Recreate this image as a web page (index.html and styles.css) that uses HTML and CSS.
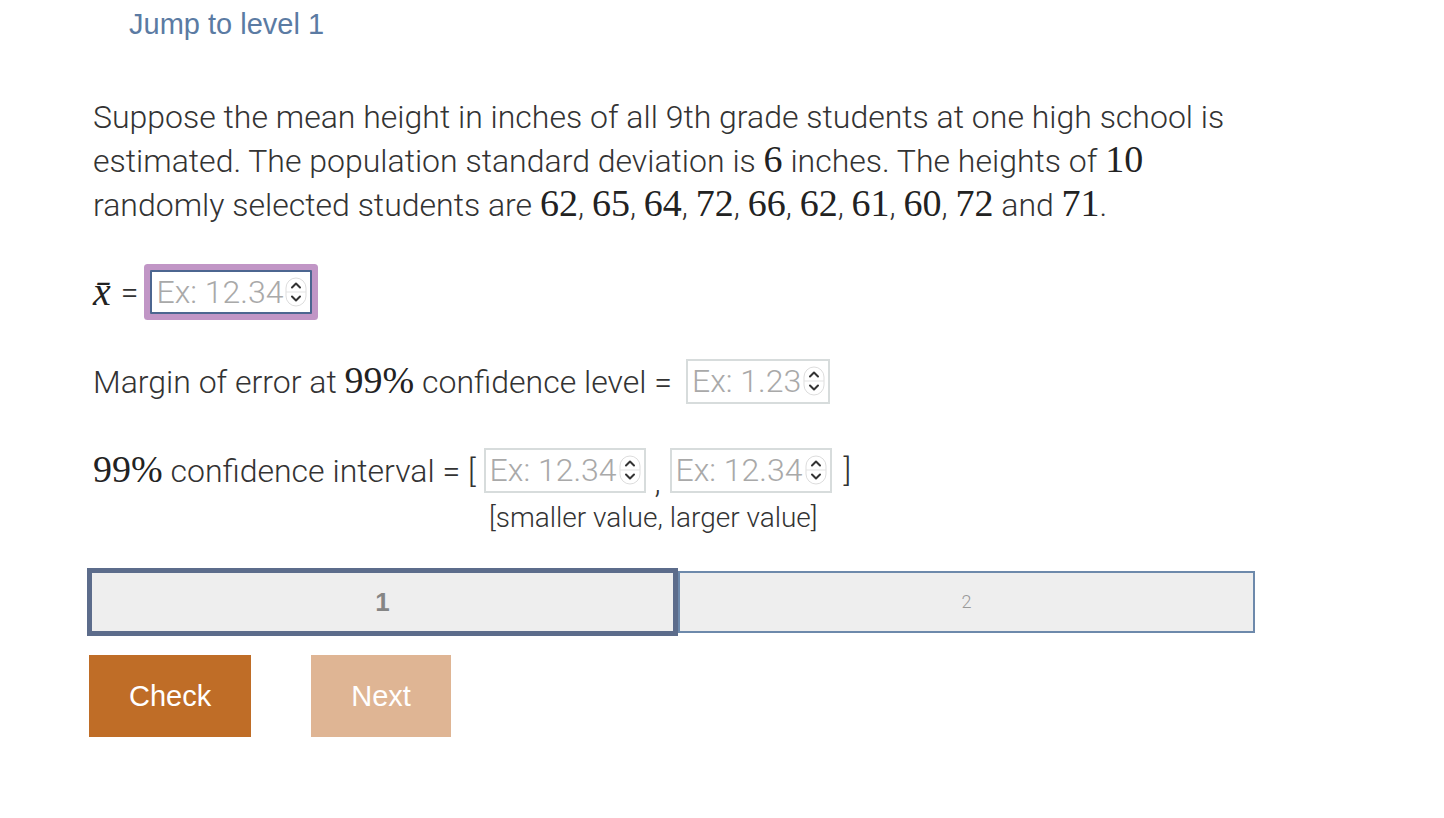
FILE: index.html
```html
<!DOCTYPE html>
<html lang="en">
<head>
    <meta charset="UTF-8">
    <meta name="viewport" content="width=device-width, initial-scale=1.0">
    <title>Confidence interval</title>
    <link rel="stylesheet" href="styles.css">
</head>
<body>
    <div class="page">
        <!-- top link -->
        <a class="jump" href="javascript:;">Jump to level 1</a>

        <!-- question text -->
        <p class="prompt">
            Suppose the mean height in inches of all 9th grade students at one high school is
            estimated. The population standard deviation is <span class="m">6</span> inches. The heights of <span class="m">10</span>
            randomly selected students are <span class="m">62</span>, <span class="m">65</span>, <span class="m">64</span>, <span class="m">72</span>, <span class="m">66</span>, <span class="m">62</span>, <span class="m">61</span>, <span class="m">60</span>, <span class="m">72</span> and <span class="m">71</span>.
        </p>

        <!-- answers -->
        <div class="row first">
            <span class="m xbar">x&#772;</span><span class="eq">=</span>
            <div class="field focus">
                <span class="ph">Ex: 12.34</span>
                <svg class="spin" width="22" height="30" viewBox="0 0 22 30"><rect x="1" y="1" width="20" height="28" rx="10" fill="#fff" stroke="#ddd"/><line x1="1" y1="15" x2="21" y2="15" stroke="#e3e3e3"/><path d="M7 10.5 L11 6.5 L15 10.5" fill="none" stroke="#333" stroke-width="2" stroke-linecap="round" stroke-linejoin="round"/><path d="M7 19.5 L11 23.5 L15 19.5" fill="none" stroke="#333" stroke-width="2" stroke-linecap="round" stroke-linejoin="round"/></svg>
            </div>
        </div>

        <div class="row">
            <span>Margin of error at <span class="m">99%</span> confidence level =</span>
            <div class="field wide">
                <span class="ph">Ex: 1.23</span>
                <svg class="spin" width="22" height="30" viewBox="0 0 22 30"><rect x="1" y="1" width="20" height="28" rx="10" fill="#fff" stroke="#ddd"/><line x1="1" y1="15" x2="21" y2="15" stroke="#e3e3e3"/><path d="M7 10.5 L11 6.5 L15 10.5" fill="none" stroke="#333" stroke-width="2" stroke-linecap="round" stroke-linejoin="round"/><path d="M7 19.5 L11 23.5 L15 19.5" fill="none" stroke="#333" stroke-width="2" stroke-linecap="round" stroke-linejoin="round"/></svg>
            </div>
        </div>

        <div class="interval">
            <div class="row">
                <span><span class="m">99%</span> confidence interval = [</span>
                <div class="field">
                    <span class="ph">Ex: 12.34</span>
                    <svg class="spin" width="22" height="30" viewBox="0 0 22 30"><rect x="1" y="1" width="20" height="28" rx="10" fill="#fff" stroke="#ddd"/><line x1="1" y1="15" x2="21" y2="15" stroke="#e3e3e3"/><path d="M7 10.5 L11 6.5 L15 10.5" fill="none" stroke="#333" stroke-width="2" stroke-linecap="round" stroke-linejoin="round"/><path d="M7 19.5 L11 23.5 L15 19.5" fill="none" stroke="#333" stroke-width="2" stroke-linecap="round" stroke-linejoin="round"/></svg>
                </div>
                <span class="comma">,</span>
                <div class="field second">
                    <span class="ph">Ex: 12.34</span>
                    <svg class="spin" width="22" height="30" viewBox="0 0 22 30"><rect x="1" y="1" width="20" height="28" rx="10" fill="#fff" stroke="#ddd"/><line x1="1" y1="15" x2="21" y2="15" stroke="#e3e3e3"/><path d="M7 10.5 L11 6.5 L15 10.5" fill="none" stroke="#333" stroke-width="2" stroke-linecap="round" stroke-linejoin="round"/><path d="M7 19.5 L11 23.5 L15 19.5" fill="none" stroke="#333" stroke-width="2" stroke-linecap="round" stroke-linejoin="round"/></svg>
                </div>
                <span class="close">]</span>
            </div>
            <div class="hint">[smaller value, larger value]</div>
        </div>

        <!-- levels -->
        <div class="levels">
            <div class="level active">1</div>
            <div class="level">2</div>
        </div>

        <!-- buttons -->
        <div class="buttons">
            <a class="btn check" href="javascript:;">Check</a>
            <a class="btn next" href="javascript:;">Next</a>
        </div>
    </div>
</body>
</html>
```

FILE: styles.css
```css
*{
    margin: 0;
    padding: 0;
    box-sizing: border-box;
}
body{
    background: #fff;
    font-family: Roboto, "Liberation Sans", sans-serif;
    font-weight: 300;
    color: #333;
}
.page{
    padding-left: 87px;
}
.jump{
    display: block;
    margin-left: 42px;
    height: 48px;
    line-height: 48px;
    font-family: "Liberation Sans", Arial, sans-serif;
    font-weight: 400;
    font-size: 29px;
    color: #5b7ba3;
    text-decoration: none;
}
.prompt{
    margin-top: 47px;
    padding-left: 6px;
    width: 1156px;
    font-size: 32px;
    line-height: 44px;
}
.m{
    font-family: "Liberation Serif", "DejaVu Serif", serif;
    font-weight: 400;
    font-size: 38px;
    line-height: 1;
    color: #222;
}
.xbar{
    font-style: italic;
    font-size: 40px;
}
.row{
    display: flex;
    align-items: center;
    height: 56px;
    margin-top: 33px;
    padding-left: 6px;
    font-size: 32px;
}
.row.first{
    margin-top: 37px;
}
.eq{
    margin: 0 0 0 10px;
}
.field{
    display: flex;
    align-items: center;
    height: 45px;
    margin-left: 8px;
    padding: 0 3px 0 4px;
    border: 2px solid #d7dcdc;
    background: #fff;
}
.field.wide{
    margin-left: 14px;
}
.field.second{
    margin-left: 0;
}
.field.focus{
    margin-left: 12px;
    height: 44px;
    border-color: #4c6690;
    border-radius: 1px;
    box-shadow: 0 0 0 6px #c196c6;
}
.ph{
    font-size: 32px;
    color: #a9a9a9;
}
.spin{
    display: block;
    margin-left: 2px;
}
.comma{
    align-self: flex-end;
    width: 24px;
    text-align: center;
    line-height: 1;
}
.close{
    margin-left: 12px;
}
.hint{
    margin-top: 3px;
    margin-left: 402px;
    height: 34px;
    line-height: 34px;
    font-size: 28px;
}
.levels{
    display: flex;
    align-items: flex-start;
    width: 1168px;
    margin-top: 33px;
}
.level{
    flex: 1;
    height: 62px;
    margin-top: 3px;
    background: #eee;
    border: 2px solid #6d89ab;
    text-align: center;
    line-height: 58px;
    font-size: 18px;
    color: #999;
}
.level.active{
    flex: 0 0 591px;
    height: 68px;
    margin-top: 0;
    border: 5px solid #5c6c8b;
    line-height: 58px;
    font-family: "Liberation Sans", Arial, sans-serif;
    font-weight: 700;
    font-size: 26px;
    color: #858585;
}
.buttons{
    display: flex;
    gap: 60px;
    margin-top: 19px;
    margin-left: 2px;
}
.btn{
    display: block;
    height: 82px;
    line-height: 82px;
    padding: 0 40px;
    font-family: "Liberation Sans", Arial, sans-serif;
    font-size: 29px;
    color: #fff;
    text-decoration: none;
}
.check{
    background: #bf6d27;
}
.next{
    background: #dfb594;
}
```
